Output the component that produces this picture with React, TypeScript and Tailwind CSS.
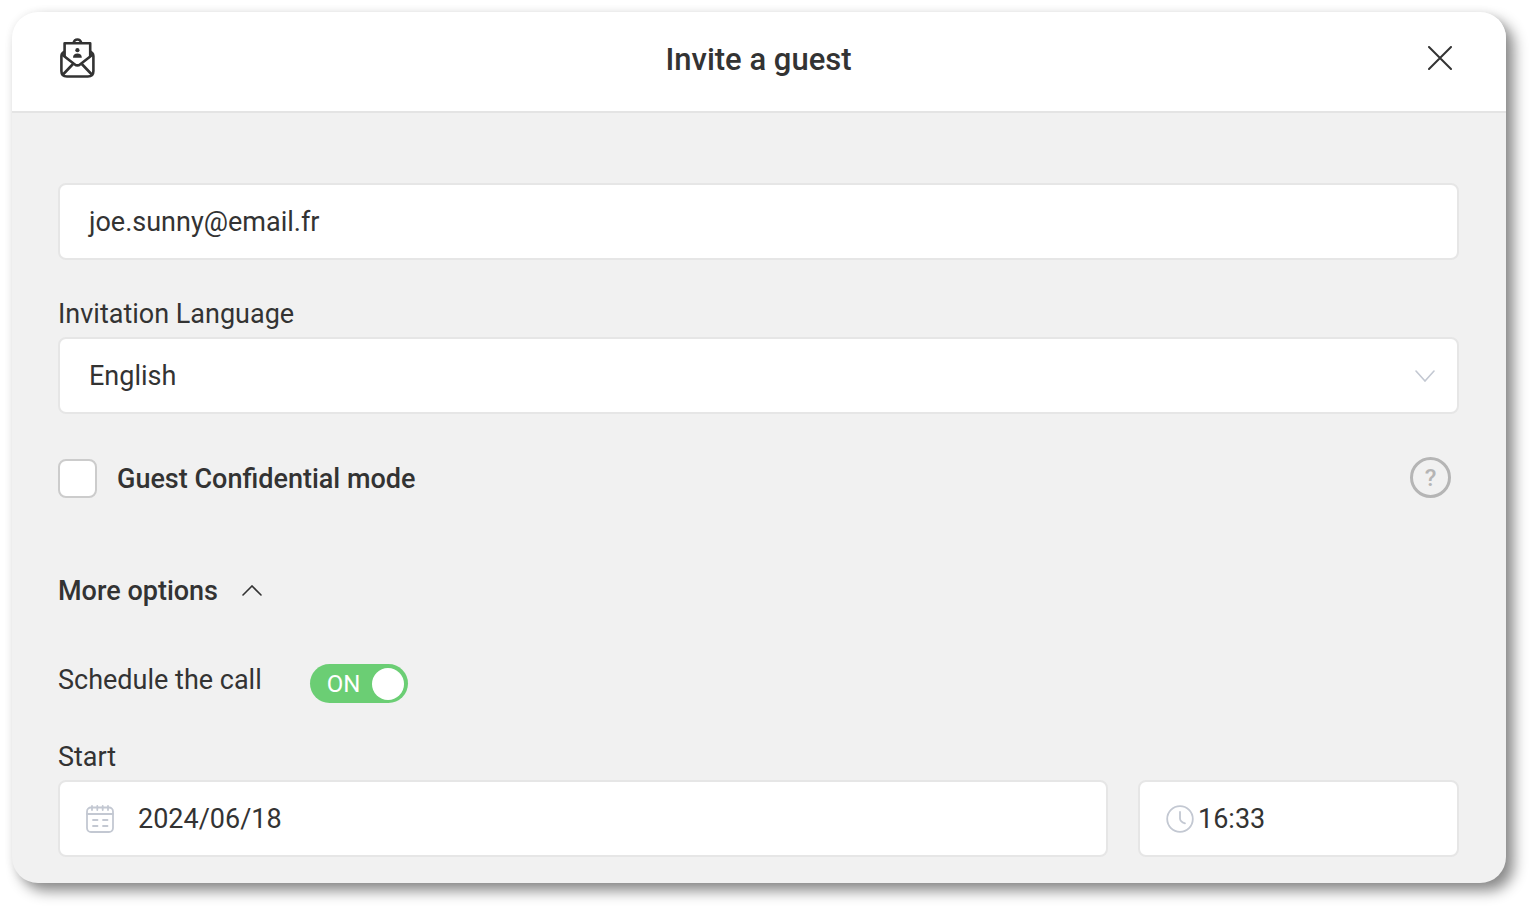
import { useState } from "react";

const fieldClass =
    "h-[77px] w-full rounded-lg border-2 border-[#e6e6e6] bg-white text-[#333333] outline-none";

const InviteIcon = () => (
    <svg width="35" height="40" viewBox="0 0 35 40" fill="none" stroke="#333333" strokeWidth="2.6" strokeLinejoin="round" aria-hidden="true">
        <path d="M4.600 18V5.300h25.600V18" />
        <path d="M13.500 4.800c.6-2 2-3.300 3.900-3.300s3.300 1.300 3.900 3.300" />
        <path d="M4.500 13.500L2.600 15c-.9.800-1.200 1.800-1.200 3v15c0 3.500 2 5.500 5.500 5.500h21c3.500 0 5.500-2 5.500-5.500V18c0-1.200-.3-2.200-1.200-3l-1.900-1.500" />
        <path d="M2 16.500L14.500 26.200c1.800 1.500 4 1.500 5.800 0L32.800 16.500" />
        <path d="M3 36.500L13 26M31.800 36.500L21.800 26" />
        <circle cx="17.400" cy="12.200" r="2.100" fill="#333333" stroke="none" />
        <path d="M13 19.800c0-3.200 1.800-4.400 4.400-4.400s4.400 1.200 4.400 4.400z" fill="#333333" stroke="none" />
    </svg>
);

const CalendarIcon = () => (
    <svg width="28" height="28" viewBox="0 0 28 28" fill="none" stroke="#c3c8d2" strokeWidth="1.8" strokeLinecap="round" aria-hidden="true">
        <rect x="1" y="2.500" width="26" height="24.500" rx="4" />
        <path d="M1 9h26M6 1v4M11.300 1v4M16.700 1v4M22 1v4" />
        <path d="M7 15h4.500M17 15h4.500M7 21h4.500M17 21h4.500" />
    </svg>
);

const ClockIcon = () => (
    <svg width="28" height="28" viewBox="0 0 28 28" fill="none" stroke="#c3c8d2" strokeWidth="1.8" strokeLinecap="round" aria-hidden="true">
        <circle cx="14" cy="14" r="12.800" />
        <path d="M14 7v6.500c0 2 2.500 4 5 4.800" />
    </svg>
);

const App = () => {
    const [email, setEmail] = useState("joe.sunny@email.fr");
    const [language, setLanguage] = useState("English");
    const [confidential, setConfidential] = useState(false);
    const [showOptions, setShowOptions] = useState(true);
    const [scheduled, setScheduled] = useState(true);
    const [date, setDate] = useState("2024/06/18");
    const [time, setTime] = useState("16:33");

    return (
        <div className="min-h-screen bg-white pt-3 pr-[30px] pb-[30px] pl-3 font-[Roboto,sans-serif] text-[27px] leading-8 text-[#333333]">
            <section
                aria-labelledby="invite-title"
                className="overflow-hidden rounded-[26px] bg-[#f1f1f1] shadow-[8px_8px_14px_0_rgba(0,0,0,0.45),0_0_10px_0_rgba(0,0,0,0.06)]"
            >
                <header className="flex h-[101px] items-center justify-between border-b-2 border-[#e4e4e4] bg-white px-12 pb-2">
                    <InviteIcon />
                    <h1 id="invite-title" className="pt-1 text-[31px] leading-9 font-medium">Invite a guest</h1>
                    <button type="button" aria-label="Close" className="flex w-9 justify-center">
                        <svg width="24" height="24" viewBox="0 0 24 24" stroke="#333333" strokeWidth="2" strokeLinecap="round">
                            <path d="M1 1l22 22M23 1L1 23" />
                        </svg>
                    </button>
                </header>

                <form className="pt-[70px] pr-[47px] pb-[26px] pl-[46px]" onSubmit={(e) => e.preventDefault()}>
                    <input
                        type="email"
                        aria-label="Email"
                        value={email}
                        onChange={(e) => setEmail(e.target.value)}
                        className={`${fieldClass} px-[26px] indent-[3px]`}
                    />

                    <label htmlFor="language" className="mt-[38px] mb-[7px] block">Invitation Language</label>
                    <div className="relative">
                        <select
                            id="language"
                            value={language}
                            onChange={(e) => setLanguage(e.target.value)}
                            className={`${fieldClass} block appearance-none px-[29px]`}
                        >
                            <option>English</option>
                            <option>Français</option>
                        </select>
                        <svg
                            className="pointer-events-none absolute top-1/2 right-6 -translate-y-1/2"
                            width="20" height="12" viewBox="0 0 20 12" fill="none" stroke="#c3c8d2" strokeWidth="1.6" strokeLinecap="round"
                            aria-hidden="true"
                        >
                            <path d="M1 1l9 10 9-10" />
                        </svg>
                    </div>

                    <div className="mt-[45px] flex h-[39px] items-end justify-between pr-2">
                        <label className="flex items-center gap-5 font-medium">
                            <input
                                type="checkbox"
                                checked={confidential}
                                onChange={(e) => setConfidential(e.target.checked)}
                                className="size-[39px] appearance-none rounded-lg border-2 border-[#cccccc] bg-white checked:bg-[#6bce74]"
                            />
                            Guest Confidential mode
                        </label>
                        <button
                            type="button"
                            aria-label="Help"
                            className="flex size-[41px] items-center justify-center rounded-full border-3 border-[#b5b5b5] text-2xl font-medium text-[#b5b5b5]"
                        >
                            ?
                        </button>
                    </div>

                    <button
                        type="button"
                        aria-expanded={showOptions}
                        onClick={() => setShowOptions(!showOptions)}
                        className="mt-[77px] flex items-center gap-6 font-medium"
                    >
                        More options
                        <svg width="20" height="12" viewBox="0 0 20 12" fill="none" stroke="#333333" strokeWidth="1.6" strokeLinecap="round">
                            <path d="M1 10l9-9 9 9" />
                        </svg>
                    </button>

                    {showOptions && (
                        <>
                            <div className="mt-[57px] flex h-[39px] items-start gap-12">
                                <span id="schedule-label">Schedule the call</span>
                                <button
                                    type="button"
                                    role="switch"
                                    aria-checked={scheduled}
                                    aria-labelledby="schedule-label"
                                    onClick={() => setScheduled(!scheduled)}
                                    className="flex h-[39px] w-[98px] items-center justify-between rounded-full bg-[#6bce74] pr-1 pl-[17px] text-2xl text-white"
                                >
                                    {scheduled ? "ON" : "OFF"}
                                    <span className="size-8 rounded-full bg-white" />
                                </button>
                            </div>

                            <label htmlFor="start-date" className="mt-[38px] mb-[7px] block">Start</label>
                            <div className="grid grid-cols-[1fr_321px] gap-[30px]">
                                <div className={`${fieldClass} flex items-center gap-6 px-[26px]`}>
                                    <CalendarIcon />
                                    <input
                                        id="start-date"
                                        value={date}
                                        onChange={(e) => setDate(e.target.value)}
                                        className="min-w-0 flex-1 outline-none"
                                    />
                                </div>
                                <div className={`${fieldClass} flex items-center gap-1 px-[26px]`}>
                                    <ClockIcon />
                                    <input
                                        aria-label="Start time"
                                        value={time}
                                        onChange={(e) => setTime(e.target.value)}
                                        className="min-w-0 flex-1 outline-none"
                                    />
                                </div>
                            </div>
                        </>
                    )}
                </form>
            </section>
        </div>
    );
};

export default App;
